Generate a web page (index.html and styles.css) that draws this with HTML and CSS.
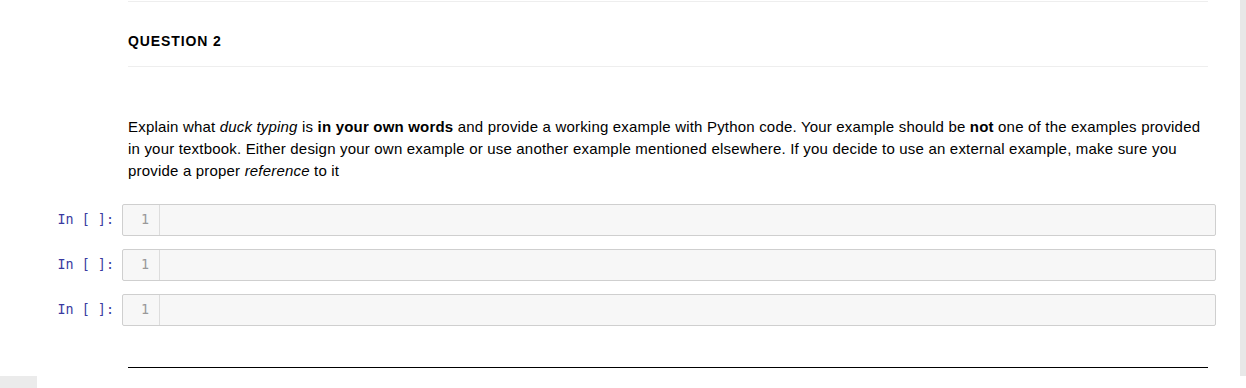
FILE: index.html
```html
<!DOCTYPE html>
<html lang="en">
<head>
    <meta charset="UTF-8">
    <meta name="viewport" content="width=device-width, initial-scale=1.0">
    <title>Question 2</title>
    <link rel="stylesheet" href="styles.css">
</head>
<body>

<div class="page">
    <div class="main">
        <div class="notebook">

            <div class="cell">
                <div class="prompt"></div>
                <div class="rendered">
                    <hr class="rule-light">
                    <h4 class="question-title">QUESTION 2</h4>
                    <hr class="rule-light">
                    <p class="question-text">
                        Explain what <em>duck typing</em> is <strong>in your own words</strong> and provide a working example with Python code. Your example should be <strong>not</strong> one of the examples provided in your textbook. Either design your own example or use another example mentioned elsewhere. If you decide to use an external example, make sure you provide a proper <em>reference</em> to it
                    </p>
                </div>
            </div>

            <div class="code-cells">
                <div class="cell code-cell">
                    <div class="prompt in-prompt">In&nbsp;[&nbsp;]:</div>
                    <div class="input-area">
                        <div class="gutter">1</div>
                        <div class="code-line"></div>
                    </div>
                </div>
                <div class="cell code-cell">
                    <div class="prompt in-prompt">In&nbsp;[&nbsp;]:</div>
                    <div class="input-area">
                        <div class="gutter">1</div>
                        <div class="code-line"></div>
                    </div>
                </div>
                <div class="cell code-cell">
                    <div class="prompt in-prompt">In&nbsp;[&nbsp;]:</div>
                    <div class="input-area">
                        <div class="gutter">1</div>
                        <div class="code-line"></div>
                    </div>
                </div>
            </div>

            <div class="cell">
                <div class="prompt"></div>
                <div class="rendered">
                    <hr class="rule-dark">
                </div>
            </div>

        </div>
        <div class="scroll-track"></div>
    </div>
    <div class="corner"></div>
</div>

</body>
</html>
```

FILE: styles.css
```css
body {
    margin: 0;
    padding: 0;
    background-color: #fff;
    color: #000;
    font-family: "Liberation Sans", Arial, sans-serif;
    font-size: 14px;
}

.page {
    display: flex;
    flex-direction: column;
    width: 1246px;
    height: 388px;
    overflow: hidden;
}

.main {
    display: flex;
    height: 376px;
}

.notebook {
    width: 1240px;
}

.scroll-track {
    width: 6px;
    background-color: #e8e8e8;
}

.corner {
    width: 37px;
    height: 12px;
    background-color: #ebebeb;
}

.cell {
    display: flex;
}

.prompt {
    width: 122px;
    flex-shrink: 0;
}

.rendered {
    width: 1094px;
    padding: 0 8px 0 6px;
    box-sizing: border-box;
}

hr {
    margin: 0;
    border: none;
}

.rule-light {
    border-top: 1px solid #eee;
}

.notebook > .cell:first-child .rule-light:first-child {
    margin-top: 1px;
}

.question-title {
    margin: 29px 0 15px;
    font-size: 14px;
    line-height: 20px;
    font-weight: bold;
    letter-spacing: 0.9px;
}

.question-text {
    margin: 49px 0 0;
    font-size: 15px;
    line-height: 22px;
    letter-spacing: 0.19px;
}

.code-cells {
    display: flex;
    flex-direction: column;
    gap: 13px;
    margin-top: 22px;
}

.in-prompt {
    padding-right: 8px;
    box-sizing: border-box;
    text-align: right;
    color: #3a3aa0;
    font-family: "DejaVu Sans Mono", "Liberation Mono", monospace;
    font-size: 13.4px;
    line-height: 32px;
}

.input-area {
    display: flex;
    width: 1094px;
    height: 32px;
    box-sizing: border-box;
    background-color: #f7f7f7;
    border: 1px solid #cfcfcf;
    border-radius: 2px;
}

.gutter {
    width: 37px;
    box-sizing: border-box;
    padding-right: 10px;
    border-right: 1px solid #ddd;
    text-align: right;
    color: #999;
    font-family: "DejaVu Sans Mono", "Liberation Mono", monospace;
    font-size: 13.4px;
    line-height: 30px;
}

.code-line {
    flex: 1;
}

.rule-dark {
    margin-top: 41px;
    border-top: 1px solid #000;
}
```
